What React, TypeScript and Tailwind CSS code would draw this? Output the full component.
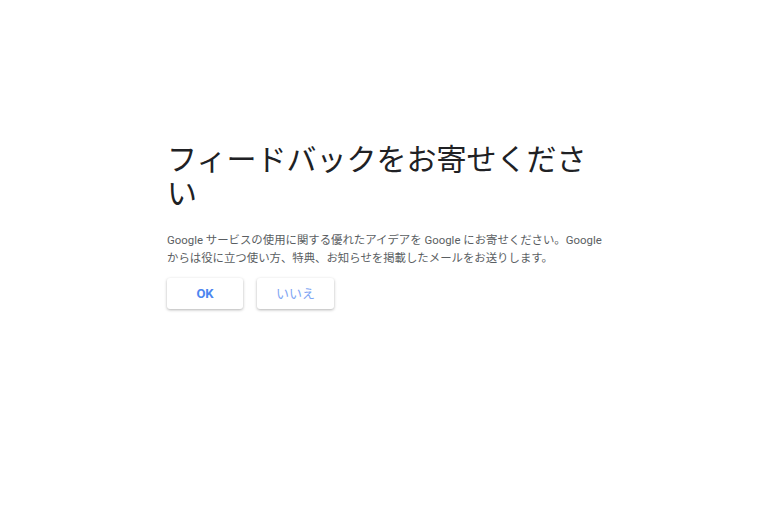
export default function App() {
  return (
    <div className="min-h-screen bg-white pt-[140px] pl-[167px]" style={{ fontFamily: 'Roboto, "Noto Sans CJK JP", sans-serif' }}>
      <div className="w-[436px]">
        <h1
          className="text-[30px] leading-[34px] text-[#202124] font-normal"
          style={{ fontFamily: '"Noto Sans CJK JP", sans-serif' }}
        >
          フィードバックをお寄せください
        </h1>
        <p className="mt-[24px] text-[11.4px] leading-[17.5px] text-[#5a5e62]">
          Google サービスの使用に関する優れたアイデアを Google にお寄せください。Google からは役に立つ使い方、特典、お知らせを掲載したメールをお送りします。
        </p>
        <div className="mt-[11px] flex gap-[14px]">
          <button className="w-[76px] h-[31px] rounded-[3px] bg-white text-[13px] font-bold text-[#4c86f0] shadow-[0_1px_3px_rgba(0,0,0,0.3)]">
            OK
          </button>
          <button className="w-[77px] h-[31px] rounded-[3px] bg-white text-[13px] text-[#7fa6f3] shadow-[0_1px_3px_rgba(0,0,0,0.3)]">
            いいえ
          </button>
        </div>
      </div>
    </div>
  );
}
